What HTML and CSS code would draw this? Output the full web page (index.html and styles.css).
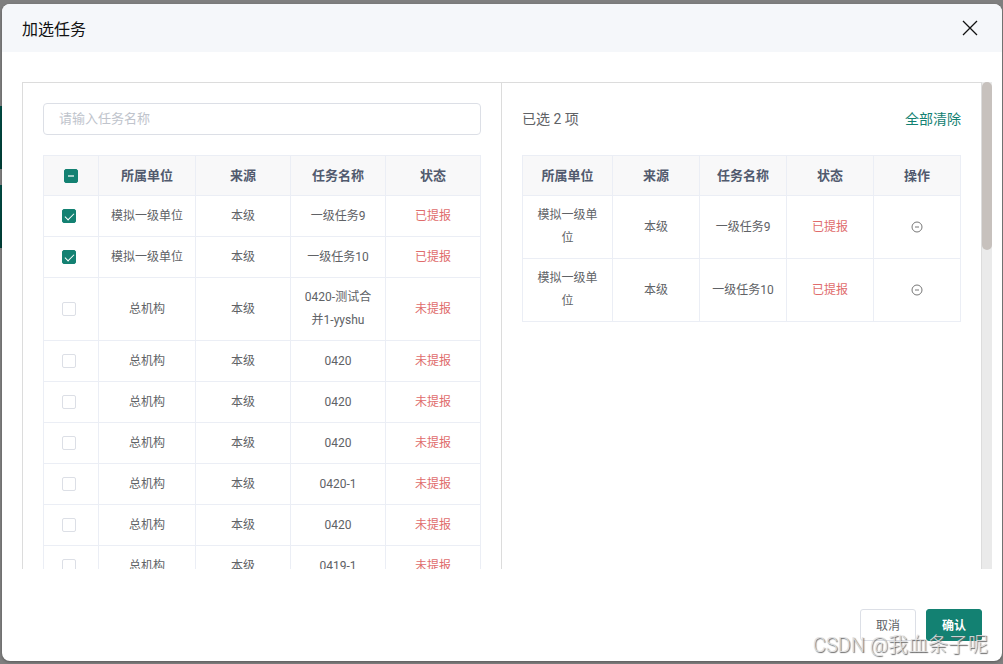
FILE: index.html
```html
<!DOCTYPE html>
<html lang="zh-CN">
<head>
  <meta charset="UTF-8" />
  <meta name="viewport" content="width=device-width, initial-scale=1.0"/>
  <title>加选任务</title>
  <link rel="stylesheet" href="styles.css">
</head>

<body>
  <div class="dialog" role="dialog" aria-labelledby="dialogTitle">
    <header class="dialog-header">
      <h1 id="dialogTitle">加选任务</h1>
      <button class="close" type="button" aria-label="关闭">
        <svg width="16" height="16" viewBox="0 0 16 16"><path d="M1 1L15 15M15 1L1 15" fill="none" stroke="#111" stroke-width="1.3"/></svg>
      </button>
    </header>

    <div class="dialog-body">
      <div class="panels">
        <!-- Left: all tasks -->
        <section class="panel panel-source">
          <input class="search" type="text" placeholder="请输入任务名称" aria-label="任务名称">
          <table class="table">
            <colgroup><col class="col-check"><col class="col-unit"><col><col><col></colgroup>
            <thead>
              <tr>
                <th><input class="checkbox partial" type="checkbox" aria-label="全选"></th>
                <th>所属单位</th><th>来源</th><th>任务名称</th><th>状态</th>
              </tr>
            </thead>
            <tbody>
              <tr><td class="check"><input class="checkbox" type="checkbox" aria-label="选择" checked></td><td>模拟一级单位</td><td>本级</td><td>一级任务9</td><td class="status">已提报</td></tr>
              <tr><td class="check"><input class="checkbox" type="checkbox" aria-label="选择" checked></td><td>模拟一级单位</td><td>本级</td><td>一级任务10</td><td class="status">已提报</td></tr>
              <tr><td class="check"><input class="checkbox" type="checkbox" aria-label="选择"></td><td>总机构</td><td>本级</td><td>0420-测试合并1-yyshu</td><td class="status">未提报</td></tr>
              <tr><td class="check"><input class="checkbox" type="checkbox" aria-label="选择"></td><td>总机构</td><td>本级</td><td>0420</td><td class="status">未提报</td></tr>
              <tr><td class="check"><input class="checkbox" type="checkbox" aria-label="选择"></td><td>总机构</td><td>本级</td><td>0420</td><td class="status">未提报</td></tr>
              <tr><td class="check"><input class="checkbox" type="checkbox" aria-label="选择"></td><td>总机构</td><td>本级</td><td>0420</td><td class="status">未提报</td></tr>
              <tr><td class="check"><input class="checkbox" type="checkbox" aria-label="选择"></td><td>总机构</td><td>本级</td><td>0420-1</td><td class="status">未提报</td></tr>
              <tr><td class="check"><input class="checkbox" type="checkbox" aria-label="选择"></td><td>总机构</td><td>本级</td><td>0420</td><td class="status">未提报</td></tr>
              <tr><td class="check"><input class="checkbox" type="checkbox" aria-label="选择"></td><td>总机构</td><td>本级</td><td>0419-1</td><td class="status">未提报</td></tr>
            </tbody>
          </table>
        </section>

        <!-- Right: selected tasks -->
        <section class="panel panel-selected">
          <div class="selected-bar">
            <span>已选 2 项</span>
            <a href="#">全部清除</a>
          </div>
          <table class="table">
            <colgroup><col class="col-picked"><col><col><col><col></colgroup>
            <thead>
              <tr><th>所属单位</th><th>来源</th><th>任务名称</th><th>状态</th><th>操作</th></tr>
            </thead>
            <tbody>
              <tr>
                <td>模拟一级单位</td><td>本级</td><td>一级任务9</td><td class="status">已提报</td>
                <td><button class="remove" type="button" aria-label="移除"><svg width="12" height="12" viewBox="0 0 12 12"><circle cx="6" cy="6" r="5"/><path d="M4 6H8"/></svg></button></td>
              </tr>
              <tr>
                <td>模拟一级单位</td><td>本级</td><td>一级任务10</td><td class="status">已提报</td>
                <td><button class="remove" type="button" aria-label="移除"><svg width="12" height="12" viewBox="0 0 12 12"><circle cx="6" cy="6" r="5"/><path d="M4 6H8"/></svg></button></td>
              </tr>
            </tbody>
          </table>
        </section>
      </div>
      <div class="scrollbar"><div class="thumb"></div></div>
    </div>

    <footer class="dialog-footer">
      <button class="button" type="button">取消</button>
      <button class="button primary" type="button">确认</button>
    </footer>
  </div>

  <div class="watermark">CSDN @我血条子呢</div>
</body>
</html>
```

FILE: styles.css
```css
* {
  margin: 0;
  padding: 0;
  box-sizing: border-box;
}

body {
  height: 100vh;
  padding: 4px 1px 3px 2px;
  overflow: hidden;
  font-family: Roboto, 'Noto Sans CJK SC', sans-serif;
  font-size: 12px;
  color: #606266;
  /* dimmed page behind the dialog */
  background-color: #7f7f7f;
  background-image: linear-gradient(#004d45, #003f38), linear-gradient(#004d45, #003f38);
  background-size: 2px 63px;
  background-position: 0 106px, 0 185px;
  background-repeat: no-repeat;
}

button,
input {
  font-family: inherit;
}

.dialog {
  display: flex;
  flex-direction: column;
  height: 100%;
  background: #fff;
  border-radius: 8px;
  box-shadow: 0 1px 3px rgba(0, 0, 0, 0.3);
  overflow: hidden;
}

.dialog-header {
  display: flex;
  justify-content: space-between;
  align-items: center;
  height: 48px;
  padding: 0 24px 0 20px;
  background: #f5f7fa;
}

.dialog-header h1 {
  padding-top: 3px;
  font-size: 16px;
  font-weight: 400;
  line-height: 24px;
  color: #111;
}

.close,
.remove {
  display: inline-flex;
  border: none;
  background: none;
  cursor: pointer;
}

.dialog-body {
  display: flex;
  flex: 1;
  min-height: 0;
  padding: 30px 10px 0 20px;
}

.panels {
  display: flex;
  flex: 1;
  overflow: hidden;
}

.panel {
  min-width: 0;
  padding: 20px;
  border-top: 1px solid #dcdcdc;
  border-left: 1px solid #dcdcdc;
}

.panel-source {
  flex: 1 1 300px;
}

.panel-selected {
  flex: 1 1 302px;
  border-right: 1px solid #dcdcdc;
}

.search {
  display: block;
  width: 100%;
  height: 32px;
  margin-bottom: 20px;
  padding: 0 15px 2px;
  border: 1px solid #dcdfe6;
  border-radius: 4px;
  font-size: 13px;
  color: #606266;
}

.search::placeholder {
  color: #c0c4cc;
}

.selected-bar {
  display: flex;
  justify-content: space-between;
  align-items: center;
  height: 32px;
  margin-bottom: 20px;
  padding-bottom: 2px;
  font-size: 14px;
}

.selected-bar a {
  color: #138172;
  text-decoration: none;
}

.table {
  width: 100%;
  table-layout: fixed;
  border-collapse: separate;
  border-spacing: 0;
  border-top: 1px solid #ebeef5;
  border-left: 1px solid #ebeef5;
  text-align: center;
}

.col-check {
  width: 55px;
}

.col-unit {
  width: 97px;
}

.col-picked {
  width: 90px;
}

.table th,
.table td {
  height: 41px;
  padding: 8px 10px;
  border-right: 1px solid #ebeef5;
  border-bottom: 1px solid #ebeef5;
  line-height: 23px;
  vertical-align: middle;
}

.table th {
  height: 40px;
  background: #f8f8f9;
  font-size: 13px;
  font-weight: 700;
  color: #515a6e;
}

.table .check {
  padding-right: 14px;
}

.table .status {
  color: #e06c6c;
}

.checkbox {
  appearance: none;
  display: inline-block;
  position: relative;
  width: 14px;
  height: 14px;
  border: 1px solid #dcdfe6;
  border-radius: 2px;
  background: #fff;
  vertical-align: middle;
}

.checkbox:checked,
.checkbox.partial {
  border-color: #138172;
  background: #138172;
}

.checkbox:checked::after {
  content: "";
  position: absolute;
  top: 1px;
  left: 4px;
  width: 4px;
  height: 8px;
  border: 1px solid #fff;
  border-top: 0;
  border-left: 0;
  transform: rotate(45deg);
}

.checkbox.partial {
  margin-bottom: 2px;
}

.checkbox.partial::after {
  content: "";
  position: absolute;
  top: 5px;
  left: 3px;
  width: 6px;
  height: 2px;
  background: #a1cdc7;
}

.remove {
  vertical-align: middle;
}

.remove svg {
  fill: none;
  stroke: #777;
}

.scrollbar {
  width: 10px;
  background: #eaeaea;
}

.thumb {
  height: 168px;
  border-radius: 5px;
  background: #c7c1bd;
}

.dialog-footer {
  display: flex;
  justify-content: flex-end;
  gap: 10px;
  padding: 40px 20px 20px;
}

.button {
  height: 32px;
  padding: 0 15px 2px;
  border: 1px solid #dcdfe6;
  border-radius: 3px;
  background: #fff;
  font-size: 12px;
  color: #606266;
  cursor: pointer;
}

.button.primary {
  border-color: #138172;
  background: #138172;
  font-weight: 700;
  color: #fff;
}

.watermark {
  position: absolute;
  right: 15px;
  bottom: 4px;
  font-size: 20px;
  font-weight: 300;
  line-height: 30px;
  color: rgba(225, 225, 225, 0.9);
  text-shadow: 1px 1px 1px #666;
}
```
